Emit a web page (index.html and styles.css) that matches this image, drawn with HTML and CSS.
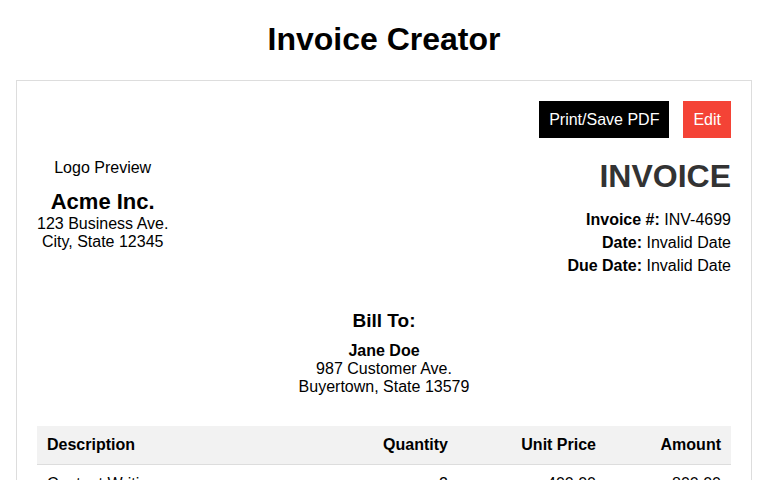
FILE: index.html
```html
<!DOCTYPE html>
<html>
<head>
<meta charset="utf-8">
<link rel="stylesheet" href="styles.css">
</head>
<body>
<h1 class="title">Invoice Creator</h1>
<div class="sheet">
  <div class="actions">
    <button class="btn btn-print">Print/Save PDF</button>
    <button class="btn btn-edit">Edit</button>
  </div>
  <div class="header">
    <div class="company">
      <div class="logo">Logo Preview</div>
      <div class="company-name">Acme Inc.</div>
      <div class="line">123 Business Ave.</div>
      <div class="line">City, State 12345</div>
    </div>
    <div class="meta">
      <div class="invoice-word">INVOICE</div>
      <div class="meta-line"><b>Invoice #:</b> INV-4699</div>
      <div class="meta-line"><b>Date:</b> Invalid Date</div>
      <div class="meta-line"><b>Due Date:</b> Invalid Date</div>
    </div>
  </div>
  <div class="bill">
    <div class="bill-title">Bill To:</div>
    <div class="bill-name">Jane Doe</div>
    <div class="line">987 Customer Ave.</div>
    <div class="line">Buyertown, State 13579</div>
  </div>
  <table class="items">
    <thead>
      <tr>
        <th class="c-desc">Description</th>
        <th class="c-qty">Quantity</th>
        <th class="c-price">Unit Price</th>
        <th class="c-amt">Amount</th>
      </tr>
    </thead>
    <tbody>
      <tr>
        <td class="c-desc">Content Writing</td>
        <td class="c-qty">2</td>
        <td class="c-price">400.00</td>
        <td class="c-amt">800.00</td>
      </tr>
    </tbody>
  </table>
</div>
</body>
</html>
```
FILE: styles.css
```css
html, body {
  margin: 0;
  padding: 0;
  background: #fff;
  font-family: "Liberation Sans", Arial, sans-serif;
  font-size: 16px;
  color: #000;
}
.title {
  font-size: 32px;
  font-weight: bold;
  text-align: center;
  margin: 21px 0 22px;
  line-height: 37px;
}
.sheet {
  margin: 0 16px;
  border: 1px solid #ddd;
  padding: 20px;
}
.actions {
  display: flex;
  justify-content: flex-end;
  gap: 14px;
}
.btn {
  font-family: "Liberation Sans", Arial, sans-serif;
  font-size: 16px;
  line-height: 17px;
  padding: 10px 10px;
  border: none;
  color: #fff;
  cursor: pointer;
}
.btn-print { background: #000; }
.btn-edit { background: #f44336; }
.header {
  display: flex;
  justify-content: space-between;
  align-items: flex-start;
  margin-top: 20px;
}
.company {
  text-align: center;
}
.logo {
  line-height: 18px;
  margin-top: 1px;
  margin-bottom: 12px;
}
.company-name {
  font-size: 22px;
  font-weight: bold;
  line-height: 25px;
  margin-bottom: 1px;
}
.line {
  line-height: 18px;
}
.meta {
  text-align: right;
}
.invoice-word {
  font-size: 32px;
  font-weight: bold;
  color: #333;
  line-height: 37px;
  margin-bottom: 13px;
}
.meta-line {
  line-height: 23px;
}
.bill {
  text-align: center;
  margin-top: 33px;
}
.bill-title {
  font-size: 19px;
  font-weight: bold;
  line-height: 22px;
  margin-bottom: 10px;
}
.bill-name {
  font-weight: bold;
  line-height: 18px;
}
.items {
  width: 100%;
  border-collapse: collapse;
  margin-top: 30px;
}
.items th, .items td {
  padding: 10px;
  line-height: 18px;
  border-bottom: 1px solid #ddd;
  text-align: right;
}
.items th {
  background: #f2f2f2;
  font-weight: bold;
}
.items .c-desc { text-align: left; }
.items .c-qty { width: 128px; }
.items .c-price { width: 128px; }
.items .c-amt { width: 105px; }
```
